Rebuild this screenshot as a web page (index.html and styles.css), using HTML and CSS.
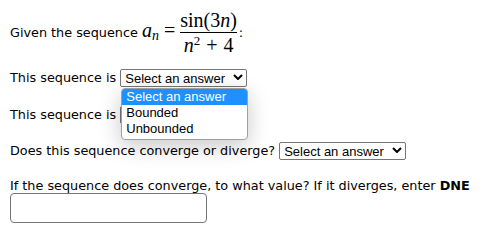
FILE: index.html
```html
<!DOCTYPE html>
<html lang="en">
<head>
    <meta charset="UTF-8">
    <title>Sequence question</title>
    <link rel="stylesheet" href="styles.css">
</head>
<body>
    <div class="question">
        <p class="q q-first">
            Given the sequence
            <span class="math"><i>a</i><sub>n</sub><span class="eq">=</span><span class="frac"><span class="num">sin(3<i>n</i>)</span><span class="den"><i>n</i><sup>2</sup><span class="op">+</span>4</span></span></span><span class="colon">:</span>
        </p>

        <p class="q">
            This sequence is
            <span class="select open">
                <select>
                    <option>Select an answer</option>
                    <option>Bounded</option>
                    <option>Unbounded</option>
                </select>
                <svg class="chev" width="10" height="6" viewBox="0 0 10 6"><path d="M1 1l4 4 4-4" fill="none" stroke="#000" stroke-width="2"/></svg>
                <span class="dropdown">
                    <span class="opt active">Select an answer</span>
                    <span class="opt">Bounded</span>
                    <span class="opt">Unbounded</span>
                </span>
            </span>
        </p>

        <p class="q">
            This sequence is
            <span class="select">
                <select>
                    <option>Select an answer</option>
                    <option>Monotonic</option>
                    <option>Not monotonic</option>
                </select>
                <svg class="chev" width="10" height="6" viewBox="0 0 10 6"><path d="M1 1l4 4 4-4" fill="none" stroke="#000" stroke-width="2"/></svg>
            </span>
        </p>

        <p class="q">
            Does this sequence converge or diverge?
            <span class="select">
                <select>
                    <option>Select an answer</option>
                    <option>Converges</option>
                    <option>Diverges</option>
                </select>
                <svg class="chev" width="10" height="6" viewBox="0 0 10 6"><path d="M1 1l4 4 4-4" fill="none" stroke="#000" stroke-width="2"/></svg>
            </span>
        </p>

        <p class="q q-last">
            If the sequence does converge, to what value? If it diverges, enter <b>DNE</b>
        </p>
        <input type="text" class="answer">
    </div>
</body>
</html>
```

FILE: styles.css
```css
body {
    margin: 0;
    padding: 0 10px;
    font-family: "DejaVu Sans", Verdana, sans-serif;
    font-size: 12.8px;
    color: #000;
    background: white;
}
.q {
    margin: 0 0 14px;
    line-height: 22px;
}
.q-first {
    margin: 8px 0 9px;
    line-height: 50px;
}
.q-last {
    margin: 15px 0 0;
    line-height: 16px;
}
.math {
    font-family: "Liberation Serif", "Times New Roman", serif;
    font-size: 20px;
    line-height: 20px;
}
.math sub {
    font-size: 14px;
    font-style: italic;
    vertical-align: -3px;
    line-height: 0;
}
.eq {
    margin: 0 5px;
}
.frac {
    display: inline-flex;
    flex-direction: column;
    align-items: center;
    vertical-align: middle;
    line-height: 20px;
}
.num {
    padding-bottom: 2px;
    border-bottom: 1px solid #000;
}
.den {
    padding-top: 2px;
}
.den sup {
    font-size: 13px;
    vertical-align: 7px;
    line-height: 0;
}
.op {
    margin: 0 6px;
}
.colon {
    margin-left: 2px;
}
.select {
    position: relative;
    display: inline-block;
    vertical-align: middle;
}
.select select {
    appearance: none;
    -webkit-appearance: none;
    font-family: "Liberation Sans", Arial, sans-serif;
    font-size: 13px;
    color: #000;
    background: white;
    border: 1px solid #767676;
    border-radius: 2px;
    height: 18px;
    width: 127px;
    padding: 0 16px 0 4px;
    margin: 0;
}
.chev {
    position: absolute;
    right: 4px;
    top: 6px;
    pointer-events: none;
}
.dropdown {
    position: absolute;
    left: 1px;
    top: 20px;
    width: 125px;
    padding-bottom: 2px;
    background: white;
    border: 1px solid #a0a0a0;
    border-radius: 4px;
    box-shadow: 0 6px 22px rgba(0,0,0,0.22);
    font-family: "Liberation Sans", Arial, sans-serif;
    font-size: 13px;
    line-height: 16px;
    z-index: 2;
    overflow: hidden;
}
.opt {
    display: block;
    padding: 0 4px;
}
.opt.active {
    background: #1e90ff;
    color: white;
}
.answer {
    display: block;
    margin-top: -1px;
    width: 197px;
    height: 30px;
    box-sizing: border-box;
    border: 1px solid #767676;
    border-radius: 4px;
    padding: 0 6px;
}
```
